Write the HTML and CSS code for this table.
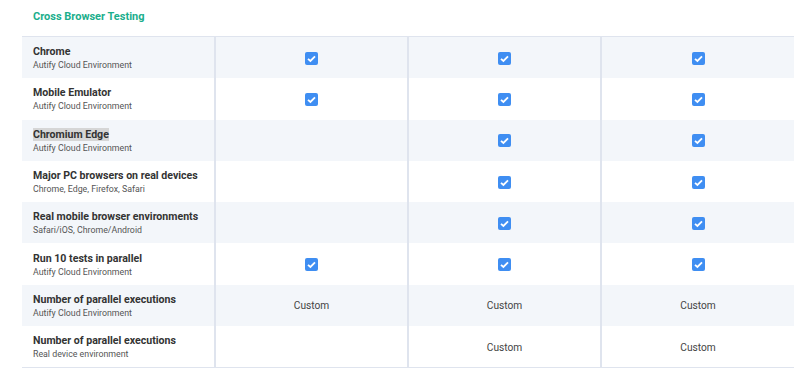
FILE: index.html
```html
<!DOCTYPE html>
<html lang="en">
<head>
    <meta charset="UTF-8">
    <title>Cross Browser Testing</title>
    <link rel="stylesheet" href="styles.css">
</head>
<body>
    <div class="section">
        <h2 class="section-title">Cross Browser Testing</h2>
        <div class="compare">
            <div class="row">
                <div class="cell feature"><div class="name">Chrome</div><div class="sub">Autify Cloud Environment</div></div>
                <div class="cell"><span class="check"></span></div>
                <div class="cell"><span class="check"></span></div>
                <div class="cell"><span class="check"></span></div>
            </div>
            <div class="row">
                <div class="cell feature"><div class="name">Mobile Emulator</div><div class="sub">Autify Cloud Environment</div></div>
                <div class="cell"><span class="check"></span></div>
                <div class="cell"><span class="check"></span></div>
                <div class="cell"><span class="check"></span></div>
            </div>
            <div class="row">
                <div class="cell feature"><div class="name"><span class="selected">Chromium Edge</span></div><div class="sub">Autify Cloud Environment</div></div>
                <div class="cell"></div>
                <div class="cell"><span class="check"></span></div>
                <div class="cell"><span class="check"></span></div>
            </div>
            <div class="row">
                <div class="cell feature"><div class="name">Major PC browsers on real devices</div><div class="sub">Chrome, Edge, Firefox, Safari</div></div>
                <div class="cell"></div>
                <div class="cell"><span class="check"></span></div>
                <div class="cell"><span class="check"></span></div>
            </div>
            <div class="row">
                <div class="cell feature"><div class="name">Real mobile browser environments</div><div class="sub">Safari/iOS, Chrome/Android</div></div>
                <div class="cell"></div>
                <div class="cell"><span class="check"></span></div>
                <div class="cell"><span class="check"></span></div>
            </div>
            <div class="row">
                <div class="cell feature"><div class="name">Run 10 tests in parallel</div><div class="sub">Autify Cloud Environment</div></div>
                <div class="cell"><span class="check"></span></div>
                <div class="cell"><span class="check"></span></div>
                <div class="cell"><span class="check"></span></div>
            </div>
            <div class="row">
                <div class="cell feature"><div class="name">Number of parallel executions</div><div class="sub">Autify Cloud Environment</div></div>
                <div class="cell">Custom</div>
                <div class="cell">Custom</div>
                <div class="cell">Custom</div>
            </div>
            <div class="row">
                <div class="cell feature"><div class="name">Number of parallel executions</div><div class="sub">Real device environment</div></div>
                <div class="cell"></div>
                <div class="cell">Custom</div>
                <div class="cell">Custom</div>
            </div>
        </div>
    </div>
</body>
</html>
```

FILE: styles.css
```css
* {
    box-sizing: border-box;
    margin: 0;
    padding: 0;
}
body {
    font-family: 'Roboto', sans-serif;
    color: #333;
    background: #ffffff;
}
.section {
    padding: 0 12px 0 22px;
}
.section-title {
    font-size: 11px;
    font-weight: 700;
    color: #1bae8c;
    height: 36px;
    line-height: 33px;
    padding-left: 11px;
}
.compare {
    border-top: 1px solid #dfe4ee;
    border-bottom: 1px solid #dfe4ee;
}
.row {
    display: grid;
    grid-template-columns: 192px 193px 193px 1fr;
    height: 41.3px;
}
.row:nth-child(odd) {
    background: #f3f6fa;
}
.cell {
    display: flex;
    align-items: center;
    justify-content: center;
    font-size: 10.2px;
    color: #444;
    border-left: 2px solid #dfe4ee;
    padding-top: 1px;
}
.cell.feature {
    border-left: none;
    flex-direction: column;
    align-items: flex-start;
    justify-content: center;
    padding: 2px 0 0 11px;
}
.name {
    font-size: 10.6px;
    font-weight: 700;
    color: #333;
    line-height: 14px;
}
.selected {
    background: #d6d6d6;
}
.sub {
    font-size: 8.8px;
    color: #555;
    line-height: 13px;
}
.check {
    width: 13px;
    height: 13px;
    border-radius: 2px;
    background: #3f8ef2 url("data:image/svg+xml;utf8,<svg xmlns='http://www.w3.org/2000/svg' viewBox='0 0 13 13'><path d='M3 6.8 L5.4 9 L10 4.3' fill='none' stroke='white' stroke-width='1.8'/></svg>") no-repeat center;
}
```
